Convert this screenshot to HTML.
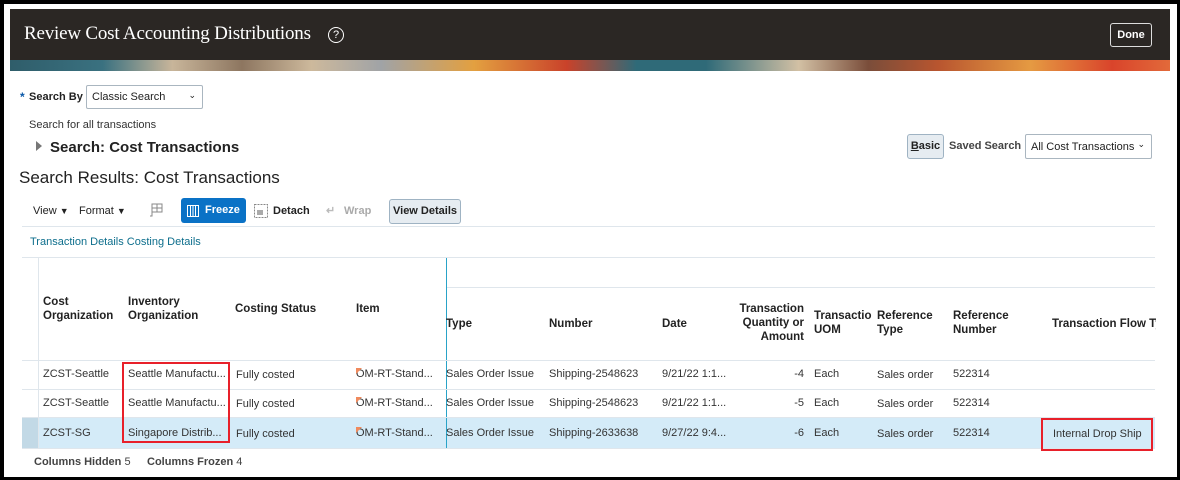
<!DOCTYPE html>
<html><head><meta charset="utf-8"><style>
*{margin:0;padding:0;box-sizing:border-box}
body{width:1180px;height:480px;background:#fff;position:relative;overflow:hidden;font-family:"Liberation Sans",Arial,sans-serif;color:#222}
.a{position:absolute;white-space:nowrap}
.f11{font-size:11px}.f12{font-size:12px}
.b{font-weight:bold}
.th{position:absolute;font-size:11.5px;font-weight:bold;line-height:14px;color:#222}
.td{position:absolute;font-size:11px;color:#333;white-space:nowrap}
.hl{position:absolute;height:1px;background:#dfe6ec}
</style></head><body>
<div class="a" style="left:0;top:0;width:1180px;height:480px;border:4px solid #000;border-width:4px 3px 3px 4px"></div>
<div class="a" style="left:4px;top:4px;width:1173px;height:5px;background:#fff"></div>
<div class="a" style="left:10px;top:9px;width:1160px;height:52px;background:#2b2724"></div>
<div class="a" style="left:10px;top:60px;width:1160px;height:11px;background:linear-gradient(90deg,#2f5d6a 0%,#3a7180 8%,#c8b59a 14%,#8d7660 20%,#cdb99c 26%,#a0a3a6 32%,#e3a040 40%,#c9422a 48%,#2f6a78 54%,#2f6a78 60%,#d2c0a4 68%,#7a4d3a 74%,#b8552f 80%,#e59a42 88%,#d9442b 95%,#e26a3a 100%)"></div>
<div class="a" style="left:24px;top:23px;font-family:'Liberation Serif',serif;font-size:19px;letter-spacing:-0.2px;color:#fff">Review Cost Accounting Distributions</div>
<div class="a" style="left:328px;top:27px;width:16px;height:16px;border:1.3px solid #fff;border-radius:50%;color:#fff;font-size:11px;text-align:center;line-height:14px">?</div>
<div class="a" style="left:1110px;top:23px;width:42px;height:24px;border:1px solid #ddd;border-radius:3px;color:#fff;font-size:11px;font-weight:bold;text-align:center;line-height:22px">Done</div>
<div class="a" style="left:20px;top:90px;font-size:12px;color:#0a58a8;font-weight:bold">*</div>
<div class="a f11 b" style="left:29px;top:91px">Search By</div>
<div class="a f11" style="left:86px;top:85px;width:117px;height:24px;border:1px solid #aab6c0;border-radius:2px;padding:5px 5px;">Classic Search<span style="position:absolute;right:6px;top:4px;font-size:9px">&#8964;</span></div>
<div class="a f11" style="left:29px;top:119px;color:#333">Search for all transactions</div>
<div class="a" style="left:36px;top:141px;width:0;height:0;border-left:6px solid #777;border-top:5px solid transparent;border-bottom:5px solid transparent"></div>
<div class="a b" style="left:50px;top:139px;font-size:15px">Search: Cost Transactions</div>
<div class="a f11 b" style="left:907px;top:134px;width:37px;height:25px;border:1px solid #9fb3c3;border-radius:3px;background:#e6ecf1;text-align:center;line-height:23px"><u>B</u>asic</div>
<div class="a f11 b" style="left:949px;top:140px;color:#444">Saved Search</div>
<div class="a f11" style="left:1025px;top:134px;width:127px;height:25px;border:1px solid #aab6c0;border-radius:2px;padding:6px 5px">All Cost Transactions<span style="position:absolute;right:6px;top:4px;font-size:9px">&#8964;</span></div>
<div class="a" style="left:19px;top:168px;font-size:17px;color:#222">Search Results: Cost Transactions</div>
<div class="a f11" style="left:33px;top:205px">View <span style="font-size:9px">&#9660;</span></div>
<div class="a f11" style="left:79px;top:205px">Format <span style="font-size:9px">&#9660;</span></div>
<svg class="a" style="left:149px;top:203px" width="14" height="14"><rect x="3" y="1" width="10" height="8" fill="none" stroke="#888"/><path d="M3 5h10M8 1v8M3 9v4h-2" stroke="#888" fill="none"/></svg>
<div class="a" style="left:181px;top:198px;width:65px;height:25px;background:#0a72c6;border-radius:3px;color:#fff;font-size:11px;font-weight:bold;line-height:25px;padding-left:24px">Freeze</div>
<svg class="a" style="left:187px;top:205px" width="12" height="12"><rect x="0.5" y="0.5" width="11" height="11" fill="none" stroke="#fff"/><path d="M3.5 1v10M6 1v10M8.5 1v10" stroke="#fff"/></svg>
<svg class="a" style="left:254px;top:204px" width="14" height="14"><rect x="0.5" y="0.5" width="13" height="13" fill="none" stroke="#888" stroke-dasharray="2 1"/><rect x="3" y="6" width="6" height="5" fill="#aaa"/></svg>
<div class="a f11 b" style="left:273px;top:205px">Detach</div>
<div class="a f11 b" style="left:326px;top:204px;color:#bbb">&#8629;</div>
<div class="a f11 b" style="left:344px;top:205px;color:#aaa">Wrap</div>
<div class="a f11 b" style="left:389px;top:199px;width:72px;height:25px;border:1px solid #9fb3c3;border-radius:3px;background:#e6ecf1;text-align:center;line-height:23px">View Details</div>
<div class="hl" style="left:22px;top:226px;width:1133px"></div>
<div class="a f11" style="left:30px;top:236px;color:#0d6e8c">Transaction Details Costing Details</div>
<div class="hl" style="left:22px;top:257px;width:1133px"></div>
<div class="a" style="left:22px;top:418px;width:1133px;height:30px;background:#d4ebf8"></div>
<div class="a" style="left:22px;top:418px;width:16px;height:30px;background:#c2d9e6"></div>
<div class="a" style="left:38px;top:257px;width:1px;height:191px;background:#dfe6ec"></div>
<div class="a" style="left:446px;top:258px;width:1px;height:190px;background:#29a3c8"></div>
<div class="hl" style="left:447px;top:287px;width:708px"></div>
<div class="hl" style="left:22px;top:360px;width:1133px"></div>
<div class="hl" style="left:22px;top:389px;width:1133px"></div>
<div class="hl" style="left:22px;top:417px;width:1133px"></div>
<div class="hl" style="left:22px;top:448px;width:1133px"></div>
<div class="th" style="left:43px;top:295px">Cost<br>Organization</div>
<div class="th" style="left:128px;top:295px">Inventory<br>Organization</div>
<div class="th" style="left:235px;top:302px">Costing Status</div>
<div class="th" style="left:356px;top:302px">Item</div>
<div class="th" style="left:446px;top:317px">Type</div>
<div class="th" style="left:549px;top:317px">Number</div>
<div class="th" style="left:662px;top:317px">Date</div>
<div class="th" style="left:730px;top:302px;width:74px;text-align:right">Transaction<br>Quantity or<br>Amount</div>
<div class="th" style="left:814px;top:309px;width:58px;overflow:hidden;white-space:nowrap">Transaction<br>UOM</div>
<div class="th" style="left:877px;top:309px">Reference<br>Type</div>
<div class="th" style="left:953px;top:309px">Reference<br>Number</div>
<div class="th" style="left:1052px;top:317px;width:104px;overflow:hidden;white-space:nowrap">Transaction Flow Type</div>
<div class="td" style="left:43px;top:368px">ZCST-Seattle</div>
<div class="td" style="left:43px;top:397px">ZCST-Seattle</div>
<div class="td" style="left:43px;top:427px">ZCST-SG</div>
<div class="td" style="left:128px;top:368px">Seattle Manufactu...</div>
<div class="td" style="left:128px;top:397px">Seattle Manufactu...</div>
<div class="td" style="left:128px;top:427px">Singapore Distrib...</div>
<div class="td" style="left:236px;top:369px">Fully costed</div>
<div class="td" style="left:236px;top:398px">Fully costed</div>
<div class="td" style="left:236px;top:428px">Fully costed</div>
<div class="td" style="left:356px;top:368px"><span style="position:absolute;left:0;top:0;border-top:6px solid #f08a5d;border-right:6px solid transparent"></span>OM-RT-Stand...</div>
<div class="td" style="left:356px;top:397px"><span style="position:absolute;left:0;top:0;border-top:6px solid #f08a5d;border-right:6px solid transparent"></span>OM-RT-Stand...</div>
<div class="td" style="left:356px;top:427px"><span style="position:absolute;left:0;top:0;border-top:6px solid #f08a5d;border-right:6px solid transparent"></span>OM-RT-Stand...</div>
<div class="td" style="left:446px;top:368px">Sales Order Issue</div>
<div class="td" style="left:446px;top:397px">Sales Order Issue</div>
<div class="td" style="left:446px;top:427px">Sales Order Issue</div>
<div class="td" style="left:549px;top:368px">Shipping-2548623</div>
<div class="td" style="left:549px;top:397px">Shipping-2548623</div>
<div class="td" style="left:549px;top:427px">Shipping-2633638</div>
<div class="td" style="left:662px;top:368px">9/21/22 1:1...</div>
<div class="td" style="left:662px;top:397px">9/21/22 1:1...</div>
<div class="td" style="left:662px;top:427px">9/27/22 9:4...</div>
<div class="td" style="left:760px;top:368px;width:44px;text-align:right">-4</div>
<div class="td" style="left:760px;top:397px;width:44px;text-align:right">-5</div>
<div class="td" style="left:760px;top:427px;width:44px;text-align:right">-6</div>
<div class="td" style="left:814px;top:368px">Each</div>
<div class="td" style="left:814px;top:397px">Each</div>
<div class="td" style="left:814px;top:427px">Each</div>
<div class="td" style="left:877px;top:369px">Sales order</div>
<div class="td" style="left:877px;top:398px">Sales order</div>
<div class="td" style="left:877px;top:428px">Sales order</div>
<div class="td" style="left:953px;top:368px">522314</div>
<div class="td" style="left:953px;top:397px">522314</div>
<div class="td" style="left:953px;top:427px">522314</div>
<div class="td" style="left:1053px;top:428px">Internal Drop Ship</div>
<div class="a" style="left:122px;top:362px;width:108px;height:81px;border:2px solid #e8202a"></div>
<div class="a" style="left:1041px;top:418px;width:112px;height:33px;border:2px solid #e8202a"></div>
<div class="a f11 b" style="left:34px;top:456px;color:#444">Columns Hidden <span style="font-weight:normal">5</span></div>
<div class="a f11 b" style="left:147px;top:456px;color:#444">Columns Frozen <span style="font-weight:normal">4</span></div>
</body></html>
